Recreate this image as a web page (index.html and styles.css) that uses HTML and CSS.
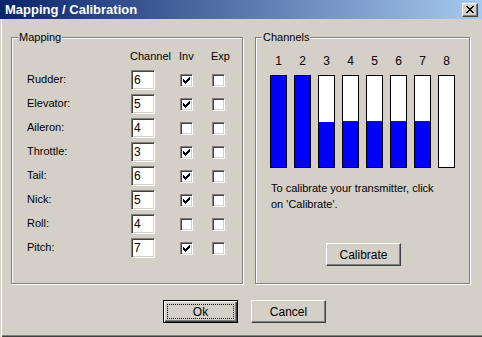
FILE: index.html
```html
<!DOCTYPE html>
<html lang="en">
<head>
    <meta charset="UTF-8">
    <title>Mapping / Calibration</title>
    <link rel="stylesheet" href="styles.css">
</head>
<body>
    <div class="window">
        <div class="titlebar">
            <span class="title">Mapping / Calibration</span>
            <button class="close-btn">
                <svg width="8" height="7" viewBox="0 0 8 7"><path d="M0 0h2v1H0zM6 0h2v1H6zM1 1h2v1H1zM5 1h2v1H5zM2 2h4v1H2zM3 3h2v1H3zM2 4h4v1H2zM1 5h2v1H1zM5 5h2v1H5zM0 6h2v1H0zM6 6h2v1H6z" fill="#000"/></svg>
            </button>
        </div>
        <div class="content">
            <div class="groups">
                <div class="group mapping">
                    <span class="legend">Mapping</span>
                    <div class="map-grid">
                        <span></span>
                        <span class="head">Channel</span>
                        <span class="head">Inv</span>
                        <span class="head">Exp</span>

                        <span class="label">Rudder:</span>
                        <input class="field" type="text" value="6">
                        <span class="check on"><svg width="7" height="7" viewBox="0 0 7 7"><path d="M0 2h1v3H0zM1 3h1v3H1zM2 4h1v3H2zM3 3h1v3H3zM4 2h1v3H4zM5 1h1v3H5zM6 0h1v3H6z" fill="#000"/></svg></span>
                        <span class="check"></span>

                        <span class="label">Elevator:</span>
                        <input class="field" type="text" value="5">
                        <span class="check on"><svg width="7" height="7" viewBox="0 0 7 7"><path d="M0 2h1v3H0zM1 3h1v3H1zM2 4h1v3H2zM3 3h1v3H3zM4 2h1v3H4zM5 1h1v3H5zM6 0h1v3H6z" fill="#000"/></svg></span>
                        <span class="check"></span>

                        <span class="label">Aileron:</span>
                        <input class="field" type="text" value="4">
                        <span class="check"></span>
                        <span class="check"></span>

                        <span class="label">Throttle:</span>
                        <input class="field" type="text" value="3">
                        <span class="check on"><svg width="7" height="7" viewBox="0 0 7 7"><path d="M0 2h1v3H0zM1 3h1v3H1zM2 4h1v3H2zM3 3h1v3H3zM4 2h1v3H4zM5 1h1v3H5zM6 0h1v3H6z" fill="#000"/></svg></span>
                        <span class="check"></span>

                        <span class="label">Tail:</span>
                        <input class="field" type="text" value="6">
                        <span class="check on"><svg width="7" height="7" viewBox="0 0 7 7"><path d="M0 2h1v3H0zM1 3h1v3H1zM2 4h1v3H2zM3 3h1v3H3zM4 2h1v3H4zM5 1h1v3H5zM6 0h1v3H6z" fill="#000"/></svg></span>
                        <span class="check"></span>

                        <span class="label">Nick:</span>
                        <input class="field" type="text" value="5">
                        <span class="check on"><svg width="7" height="7" viewBox="0 0 7 7"><path d="M0 2h1v3H0zM1 3h1v3H1zM2 4h1v3H2zM3 3h1v3H3zM4 2h1v3H4zM5 1h1v3H5zM6 0h1v3H6z" fill="#000"/></svg></span>
                        <span class="check"></span>

                        <span class="label">Roll:</span>
                        <input class="field" type="text" value="4">
                        <span class="check"></span>
                        <span class="check"></span>

                        <span class="label">Pitch:</span>
                        <input class="field" type="text" value="7">
                        <span class="check on"><svg width="7" height="7" viewBox="0 0 7 7"><path d="M0 2h1v3H0zM1 3h1v3H1zM2 4h1v3H2zM3 3h1v3H3zM4 2h1v3H4zM5 1h1v3H5zM6 0h1v3H6z" fill="#000"/></svg></span>
                        <span class="check"></span>
                    </div>
                </div>
                <div class="group channels">
                    <span class="legend">Channels</span>
                    <div class="bars">
                        <div class="channel"><span class="num">1</span><div class="bar"><div class="fill" style="height: 100%"></div></div></div>
                        <div class="channel"><span class="num">2</span><div class="bar"><div class="fill" style="height: 100%"></div></div></div>
                        <div class="channel"><span class="num">3</span><div class="bar"><div class="fill" style="height: 49%"></div></div></div>
                        <div class="channel"><span class="num">4</span><div class="bar"><div class="fill" style="height: 50.5%"></div></div></div>
                        <div class="channel"><span class="num">5</span><div class="bar"><div class="fill" style="height: 50.5%"></div></div></div>
                        <div class="channel"><span class="num">6</span><div class="bar"><div class="fill" style="height: 50.5%"></div></div></div>
                        <div class="channel"><span class="num">7</span><div class="bar"><div class="fill" style="height: 50.5%"></div></div></div>
                        <div class="channel"><span class="num">8</span><div class="bar"><div class="fill" style="height: 0%"></div></div></div>
                    </div>
                    <p class="hint">To calibrate your transmitter, click<br>on 'Calibrate'.</p>
                    <button class="btn calibrate">Calibrate</button>
                </div>
            </div>
            <div class="actions">
                <button class="btn default">Ok</button>
                <button class="btn">Cancel</button>
            </div>
        </div>
    </div>
</body>
</html>
```

FILE: styles.css
```css
body {
    margin: 0;
    padding: 0;
    background: #d4d0c8;
    font-family: "Liberation Sans", Arial, sans-serif;
    font-size: 11px;
    color: #000;
}
.window {
    width: 482px;
    height: 337px;
    background: #d4d0c8;
    display: flex;
    flex-direction: column;
    box-shadow: inset 1px 0 #d4d0c8, inset 2px 0 #fff, inset 0 -1px #404040, inset 0 -2px #808080;
    overflow: hidden;
}
/* Title bar */
.titlebar {
    height: 19px;
    display: flex;
    align-items: center;
    justify-content: space-between;
    padding: 0 4px 0 5px;
    background: linear-gradient(to right, #0a246a, #a6caf0);
}
.title {
    color: #fff;
    font-weight: bold;
    font-size: 13px;
    line-height: 16px;
}
.close-btn {
    width: 16px;
    height: 14px;
    padding: 0;
    display: flex;
    align-items: center;
    justify-content: center;
    background: #d4d0c8;
    border: 1px solid;
    border-color: #fff #404040 #404040 #fff;
    box-shadow: inset -1px -1px #808080;
}
.content {
    flex: 1;
    display: flex;
    flex-direction: column;
    padding: 0 12px 0 11px;
}
.groups {
    display: flex;
    gap: 12px;
    margin-top: 18px;
}
/* Etched group box */
.group {
    position: relative;
    height: 247px;
    box-sizing: border-box;
    border: 1px solid #808080;
    box-shadow: inset 1px 1px #fff, 1px 1px #fff;
}
.legend {
    position: absolute;
    top: -8px;
    left: 6px;
    padding: 0 1px;
    line-height: 14px;
    background: #d4d0c8;
}
.mapping {
    width: 232px;
    padding: 6px 0 0 15px;
}
.channels {
    width: 215px;
    padding: 16px 0 0 14px;
    display: flex;
    flex-direction: column;
}
/* Mapping grid */
.map-grid {
    display: grid;
    grid-template-columns: 104px 49px 32px 32px;
    grid-auto-rows: 24px;
    align-items: center;
}
.head {
    margin-left: -1px;
    line-height: 14px;
}
.label {
    line-height: 14px;
    margin-top: -3px;
}
.field {
    width: 24px;
    height: 20px;
    box-sizing: border-box;
    margin: 0;
    padding: 0 0 0 2px;
    font-family: inherit;
    font-size: 12px;
    background: #fff;
    border: 1px solid;
    border-color: #808080 #fff #fff #808080;
    box-shadow: inset 1px 1px #404040, inset -1px -1px #d4d0c8;
    outline: none;
}
.check {
    width: 13px;
    height: 13px;
    box-sizing: border-box;
    padding: 2px 0 0 2px;
    background: #fff;
    border: 1px solid;
    border-color: #808080 #fff #fff #808080;
    box-shadow: inset 1px 1px #404040, inset -1px -1px #d4d0c8;
}
.check svg {
    display: block;
}
/* Channel bars */
.bars {
    display: flex;
    gap: 7px;
}
.channel {
    display: flex;
    flex-direction: column;
    align-items: center;
    gap: 7px;
    width: 17px;
}
.num {
    line-height: 14px;
    font-size: 12px;
}
.bar {
    width: 17px;
    height: 93px;
    box-sizing: border-box;
    border: 1px solid #000;
    background: #fff;
    display: flex;
    align-items: flex-end;
}
.fill {
    width: 100%;
    background: #0000ff;
}
.hint {
    margin: 12px 0 0 1px;
    line-height: 16px;
}
/* Buttons */
.btn {
    width: 75px;
    height: 23px;
    padding: 0;
    font-family: inherit;
    font-size: 12px;
    color: #000;
    background: #d4d0c8;
    border: 1px solid;
    border-color: #fff #404040 #404040 #fff;
    box-shadow: inset -1px -1px #808080;
}
.calibrate {
    align-self: flex-start;
    margin: 31px 0 0 56px;
}
.btn.default {
    border: 1px solid #000;
    box-shadow: inset 1px 1px #fff, inset -1px -1px #404040, inset -2px -2px #808080;
    outline: 1px dotted #000;
    outline-offset: -5px;
}
.actions {
    display: flex;
    justify-content: center;
    gap: 13px;
    margin-top: 16px;
    padding-left: 8px;
}
```
